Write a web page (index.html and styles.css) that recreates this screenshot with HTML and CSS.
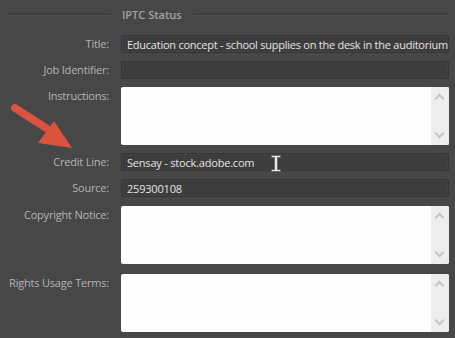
FILE: index.html
```html
<!DOCTYPE html>
<html>
<head>
<meta charset="utf-8">
<link rel="stylesheet" href="styles.css">
</head>
<body>
<div class="panel">
  <div class="section-head">
    <span class="rule rule-left"></span>
    <span class="head-title">IPTC Status</span>
    <span class="rule rule-right"></span>
  </div>
  <div class="form">
    <label class="lbl">Title:</label>
    <div class="field"><span class="val tight">Education concept - school supplies on the desk in the auditorium</span></div>

    <label class="lbl">Job Identifier:</label>
    <div class="field"></div>

    <label class="lbl lbl-top">Instructions:</label>
    <div class="area"><div class="area-body"></div><div class="sbar"><span class="chev up"></span><span class="chev down"></span></div></div>

    <label class="lbl">Credit Line:</label>
    <div class="field"><span class="val">Sensay - stock.adobe.com</span></div>

    <label class="lbl">Source:</label>
    <div class="field"><span class="val">259300108</span></div>

    <label class="lbl lbl-top push1">Copyright Notice:</label>
    <div class="area push1"><div class="area-body"></div><div class="sbar"><span class="chev up"></span><span class="chev down"></span></div></div>

    <label class="lbl lbl-top push2">Rights Usage Terms:</label>
    <div class="area push2"><div class="area-body"></div><div class="sbar"><span class="chev up"></span><span class="chev down"></span></div></div>
  </div>

  <svg class="arrow" width="80" height="60" viewBox="0 0 80 60">
    <line x1="15" y1="13" x2="46" y2="33" stroke="#d9533f" stroke-width="8" stroke-linecap="round"/>
    <polygon points="38,48 54,26 72,53" fill="#d9533f"/>
  </svg>

  <svg class="ibeam" width="12" height="19" viewBox="0 0 12 19">
    <path d="M1.5 1.5 H10.5 V3.5 H7.5 V15.5 H10.5 V17.5 H1.5 V15.5 H4.5 V3.5 H1.5 Z" fill="#e8e8e8" stroke="#6a6a6a" stroke-width="1"/>
  </svg>
</div>
</body>
</html>
```
FILE: styles.css
```css
html, body {
  margin: 0;
  padding: 0;
  background: #474747;
}
.panel {
  position: relative;
  width: 455px;
  height: 338px;
  overflow: hidden;
  background: #474747;
  font-family: "Open Sans", "Noto Sans", sans-serif;
  font-size: 11px;
}
.section-head {
  display: flex;
  align-items: center;
  height: 29px;
  padding: 0 6px 0 7px;
}
.rule {
  height: 2px;
  background: #3f3f3f;
  border-bottom: 1px solid #4e4e4e;
}
.rule-left { width: 104px; }
.rule-right { flex: 1; }
.head-title {
  color: #a3a3a3;
  font-weight: 600;
  padding: 0 11px 0 11px;
}
.form {
  display: grid;
  grid-template-columns: 109px 328px;
  column-gap: 12px;
  row-gap: 8px;
  padding-top: 6px;
  letter-spacing: -0.2px;
}
.lbl {
  color: #b4b4b4;
  text-align: right;
  align-self: center;
  line-height: 18px;
  white-space: nowrap;
}
.lbl-top { align-self: start; }
.push1 { margin-top: 1px; }
.push2 { margin-top: 2px; }
.field {
  height: 16px;
  background: #3d3d3d;
  border: 1px solid #363636;
  border-radius: 2px;
  box-shadow: inset 0 0 0 1px #424242;
  display: flex;
  align-items: center;
  padding-left: 5px;
  overflow: hidden;
}
.val {
  color: #e4e4e4;
  white-space: nowrap;
}
.val.tight { letter-spacing: -0.25px; }
.area {
  height: 58px;
  display: flex;
  background: #fefefe;
  border-radius: 2px;
  overflow: hidden;
}
.area-body { flex: 1; }
.sbar {
  width: 18px;
  background: #eeeeee;
  position: relative;
}
.chev {
  position: absolute;
  left: 5px;
  width: 5px;
  height: 5px;
  border-left: 2px solid #c4c4c4;
  border-top: 2px solid #c4c4c4;
}
.chev.up { top: 8px; transform: rotate(45deg); }
.chev.down { bottom: 8px; transform: rotate(225deg); }
.arrow {
  position: absolute;
  left: 0;
  top: 95px;
}
.ibeam {
  position: absolute;
  left: 270px;
  top: 154px;
}
```
